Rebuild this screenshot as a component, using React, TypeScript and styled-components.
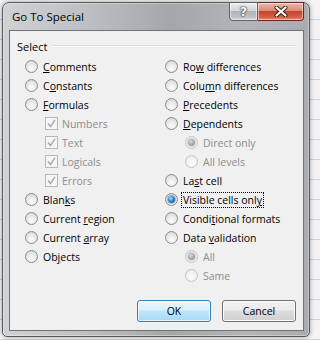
import React from 'react';
import styled, { createGlobalStyle } from 'styled-components';

type Option = {
  label: string;
  u?: number;
  kind?: 'radio' | 'check';
  sub?: boolean;
  disabled?: boolean;
  checked?: boolean;
  focused?: boolean;
};

const leftOptions: Option[] = [
  { label: 'Comments', u: 0 },
  { label: 'Constants', u: 1 },
  { label: 'Formulas', u: 0 },
  { label: 'Numbers', kind: 'check', sub: true, disabled: true, checked: true },
  { label: 'Text', kind: 'check', sub: true, disabled: true, checked: true },
  { label: 'Logicals', kind: 'check', sub: true, disabled: true, checked: true },
  { label: 'Errors', kind: 'check', sub: true, disabled: true, checked: true },
  { label: 'Blanks', u: 4 },
  { label: 'Current region', u: 8 },
  { label: 'Current array', u: 8 },
  { label: 'Objects', u: 2 },
];

const rightOptions: Option[] = [
  { label: 'Row differences', u: 2 },
  { label: 'Column differences', u: 4 },
  { label: 'Precedents', u: 0 },
  { label: 'Dependents', u: 0 },
  { label: 'Direct only', sub: true, disabled: true, checked: true },
  { label: 'All levels', sub: true, disabled: true },
  { label: 'Last cell', u: 2 },
  { label: 'Visible cells only', u: 17, checked: true, focused: true },
  { label: 'Conditional formats', u: 5 },
  { label: 'Data validation', u: 5 },
  { label: 'All', sub: true, disabled: true, checked: true },
  { label: 'Same', sub: true, disabled: true },
];

const GlobalStyle = createGlobalStyle`
  html, body {
    margin: 0;
    padding: 0;
  }
  body {
    width: 318px;
    height: 340px;
    overflow: hidden;
    background: repeating-linear-gradient(to bottom, #f4f4f4 0 19px, #cfd3d8 19px 20px);
    font-family: "Open Sans", "Noto Sans", sans-serif;
  }
`;

const Window = styled.div`
  margin: 2px 0 0 2px;
  width: 308px;
  height: 335px;
  box-sizing: border-box;
  border: 1px solid #55585c;
  border-radius: 7px 7px 5px 5px;
  padding: 0 5px 5px 6px;
  display: flex;
  flex-direction: column;
  background: linear-gradient(90deg, #cfd1d4 0%, #bfc2c5 25%, #a4a7aa 55%, #b3b5b8 80%, #a9acaf 100%);
  box-shadow: inset 0 0 0 1px rgba(255, 255, 255, 0.35), 0 0 5px rgba(0, 0, 0, 0.35);
`;

const TitleBar = styled.div`
  height: 27px;
  display: flex;
  align-items: flex-start;
`;

const Title = styled.div`
  flex: 1;
  margin-left: 3px;
  line-height: 27px;
  font-size: 11.5px;
  color: #000;
`;

const CaptionButtons = styled.div`
  display: flex;
  margin-top: -1px;
`;

const CaptionButton = styled.div<{ $close?: boolean }>`
  width: ${(p) => (p.$close ? 46 : 29)}px;
  height: 19px;
  box-sizing: border-box;
  display: grid;
  place-items: center;
  border: 1px solid ${(p) => (p.$close ? '#5e2b22' : '#5d6064')};
  border-left-width: ${(p) => (p.$close ? 0 : 1)}px;
  border-radius: ${(p) => (p.$close ? '0 0 4px 0' : '0 0 0 4px')};
  background: ${(p) =>
    p.$close
      ? 'linear-gradient(#ecb9ab 0%, #d98b77 45%, #c6452c 50%, #cf5e42 80%, #e08a6c 100%)'
      : 'linear-gradient(#eceef0 0%, #d2d5d8 45%, #b0b4b8 50%, #bcc0c4 80%, #d3d6d9 100%)'};
  box-shadow: inset 0 0 0 1px rgba(255, 255, 255, 0.5);
`;

const HelpGlyph = styled.span`
  font-family: "DejaVu Sans", sans-serif;
  font-weight: bold;
  font-size: 13px;
  line-height: 1;
  color: #fff;
  text-shadow: 0 0 1px #2c3238, 0 0 1px #2c3238, 0 0 2px #2c3238;
`;

const Client = styled.div`
  flex: 1;
  display: flex;
  flex-direction: column;
  border: 1px solid #6f7377;
  background: #f0f0f0;
  padding: 8px 7px 8px 7px;
  font-size: 10px;
  color: #000;
`;

const GroupHeader = styled.div`
  display: flex;
  align-items: center;
  gap: 5px;
  height: 14px;
  font-size: 11px;
`;

const GroupLine = styled.div`
  flex: 1;
  height: 0;
  border-top: 1px solid #d5dfe5;
  border-bottom: 1px solid #fff;
`;

const Columns = styled.div`
  display: grid;
  grid-template-columns: 140px 1fr;
  margin: 4px 0 0 8px;
`;

const Column = styled.div`
  display: flex;
  flex-direction: column;
`;

const Row = styled.div<{ $sub?: boolean; $disabled?: boolean }>`
  height: 19px;
  display: flex;
  align-items: center;
  gap: 4px;
  padding-left: ${(p) => (p.$sub ? 20 : 0)}px;
  color: ${(p) => (p.$disabled ? '#8d8d8d' : '#000')};
`;

const Radio = styled.span<{ $checked?: boolean; $disabled?: boolean }>`
  width: 13px;
  height: 13px;
  flex: none;
  box-sizing: border-box;
  border-radius: 50%;
  display: grid;
  place-items: center;
  border: 1px solid ${(p) => (p.$disabled ? '#c2c4c6' : '#8a8c8e')};
  background: ${(p) =>
    p.$disabled
      ? 'radial-gradient(circle at 50% 65%, #fbfbfb 0%, #f0f0f0 60%, #e6e6e6 100%)'
      : 'radial-gradient(circle at 50% 70%, #fdfdfd 0%, #e6e6e6 55%, #cfcfcf 100%)'};

  &::after {
    content: '';
    display: ${(p) => (p.$checked ? 'block' : 'none')};
    width: 7px;
    height: 7px;
    border-radius: 50%;
    background: ${(p) =>
      p.$disabled
        ? 'radial-gradient(circle at 40% 35%, #d8d8d8 0%, #a8a8a8 55%, #8f8f8f 100%)'
        : 'radial-gradient(circle at 40% 35%, #9fe2ff 0%, #2a8ad0 45%, #0d3f70 100%)'};
    box-shadow: 0 0 0 1px ${(p) => (p.$disabled ? 'rgba(150,150,150,0.35)' : 'rgba(20,60,110,0.3)')};
  }
`;

const Check = styled.span`
  width: 13px;
  height: 13px;
  flex: none;
  box-sizing: border-box;
  border: 1px solid #b5b7b9;
  background: #f6f6f6;
  display: grid;
  place-items: center;
  margin-right: -1px;
`;

const Label = styled.span<{ $focused?: boolean }>`
  padding: 0 1px;
  line-height: 14px;
  font-size: 10.5px;
  outline: ${(p) => (p.$focused ? '1px dotted #000' : 'none')};
  white-space: nowrap;
`;

const Footer = styled.div`
  margin-top: auto;
  display: flex;
  justify-content: flex-end;
  gap: 11px;
`;

const Button = styled.div<{ $default?: boolean }>`
  width: 74px;
  height: 22px;
  box-sizing: border-box;
  display: grid;
  place-items: center;
  font-size: 10.5px;
  border-radius: 3px;
  border: 1px solid ${(p) => (p.$default ? '#3c7fb1' : '#707070')};
  background: ${(p) =>
    p.$default
      ? 'linear-gradient(#eaf6fd 0%, #d9f0fc 45%, #bee6fd 50%, #a7d9f5 100%)'
      : 'linear-gradient(#f2f2f2 0%, #ebebeb 45%, #dddddd 50%, #cfcfcf 100%)'};
  box-shadow: inset 0 0 0 1px ${(p) => (p.$default ? 'rgba(255,255,255,0.7)' : '#fcfcfc')};
`;

const renderLabel = (text: string, u?: number) => {
  if (u === undefined) return text;
  return (
    <>
      {text.slice(0, u)}
      <u>{text[u]}</u>
      {text.slice(u + 1)}
    </>
  );
};

const OptionRow = ({ option }: { option: Option }) => (
  <Row $sub={option.sub} $disabled={option.disabled}>
    {option.kind === 'check' ? (
      <Check>
        <svg width="9" height="9" viewBox="0 0 9 9">
          <path d="M1 4.5 L3.5 7.5 L8 0.8" fill="none" stroke="#a8a8a8" strokeWidth="1.4" />
        </svg>
      </Check>
    ) : (
      <Radio $checked={option.checked} $disabled={option.disabled} />
    )}
    <Label $focused={option.focused}>{renderLabel(option.label, option.u)}</Label>
  </Row>
);

const App = () => (
  <>
    <GlobalStyle />
    <Window>
      <TitleBar>
        <Title>Go To Special</Title>
        <CaptionButtons>
          <CaptionButton>
            <HelpGlyph>?</HelpGlyph>
          </CaptionButton>
          <CaptionButton $close>
            <svg width="14" height="11" viewBox="0 0 14 11">
              <path d="M2.5 1.5 L11.5 9.5 M11.5 1.5 L2.5 9.5" stroke="#3a1a14" strokeWidth="4" strokeLinecap="round" />
              <path d="M2.5 1.5 L11.5 9.5 M11.5 1.5 L2.5 9.5" stroke="#fff" strokeWidth="2.2" strokeLinecap="round" />
            </svg>
          </CaptionButton>
        </CaptionButtons>
      </TitleBar>
      <Client>
        <GroupHeader>
          Select
          <GroupLine />
        </GroupHeader>
        <Columns>
          <Column>
            {leftOptions.map((o) => (
              <OptionRow key={o.label} option={o} />
            ))}
          </Column>
          <Column>
            {rightOptions.map((o) => (
              <OptionRow key={o.label} option={o} />
            ))}
          </Column>
        </Columns>
        <Footer>
          <Button $default>OK</Button>
          <Button>Cancel</Button>
        </Footer>
      </Client>
    </Window>
  </>
);

export default App;
